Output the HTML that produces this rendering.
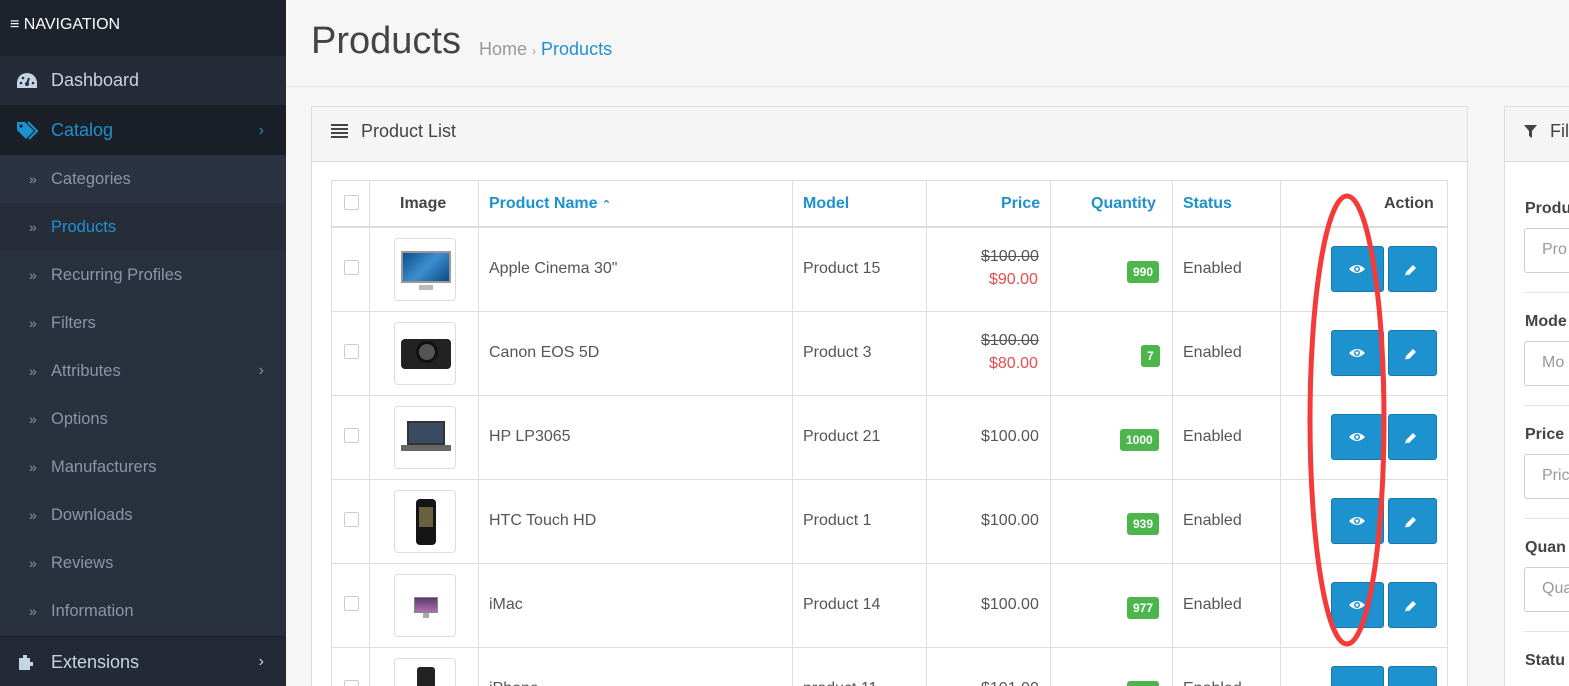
<!DOCTYPE html>
<html style="overflow:hidden;width:1569px;height:686px"><head><meta charset="utf-8"><style>
*{margin:0;padding:0;box-sizing:border-box}
body{width:1569px;height:686px;overflow:hidden;background:#f6f6f6;font-family:"Liberation Sans",sans-serif;position:relative;color:#555}
.a{position:absolute}
#side{left:0;top:0;width:286px;height:686px;background:#2a313e}
.si{position:absolute;left:0;width:286px;height:48px;line-height:48px;font-size:16.5px;color:#8a96a6;padding-left:51px}
.si:before{content:"»";position:absolute;left:29px;color:#8a96a6;font-size:14px}
.top{position:absolute;left:0;width:286px;font-size:18px;padding-left:51px;color:#c5d4e4}
.chev{position:absolute;right:22px;font-size:16px}
.row{position:absolute;left:331px;width:1117px;height:84px;border-bottom:1px solid #ddd}
.c{position:absolute;top:0;height:84px;border-left:1px solid #ddd}
.t{position:absolute;font-size:16px;color:#555}
.cb{position:absolute;left:12px;top:32px;width:15px;height:15px;border:1px solid #ccc;border-radius:2px;background:#fff}
.thumb{position:absolute;left:62px;top:10px;width:62px;height:63px;border:1px solid #ddd;border-radius:4px;background:#fff}
.badge{position:absolute;background:#4cb64c;color:#fff;font-weight:bold;font-size:12px;height:22px;line-height:22px;padding:0 6px;border-radius:3px;top:33px}
.btn{position:absolute;top:18px;width:53px;height:46px;background:#1e91cf;border:1px solid #1978ab;border-radius:3px}
.hd{position:absolute;top:0;height:47px;line-height:46px;font-weight:bold;font-size:16px;color:#1e91cf}
</style></head><body>
<div id="side" class="a">
 <div class="a" style="left:0;top:0;width:286px;height:56px;background:#1d222d;color:#fff;font-size:16px;line-height:50px;padding-left:10px">≡ NAVIGATION</div>
 <div class="top" style="top:56px;height:50px;line-height:49px;background:#252b37;border-bottom:1px solid #1c212b">Dashboard
  <svg class="a" style="left:16px;top:16px" width="22" height="18" viewBox="0 0 22 18"><path d="M11 1A10 10 0 0 0 1 11v5h20v-5A10 10 0 0 0 11 1z" fill="#c5d4e4"/><circle cx="11" cy="12" r="2" fill="#252b37"/><path d="M11 12l2-6" stroke="#252b37" stroke-width="2"/><circle cx="5" cy="11" r="1.3" fill="#252b37"/><circle cx="7" cy="6" r="1.3" fill="#252b37"/><circle cx="17" cy="11" r="1.3" fill="#252b37"/></svg></div>
 <div class="top" style="top:106px;height:49px;line-height:49px;background:#1a1f28;color:#1e91cf">Catalog<span class="chev">›</span>
  <svg class="a" style="left:16px;top:15px" width="24" height="20" viewBox="0 0 24 20"><path d="M1 1h8l9 9-8 8-9-9z" fill="#1e91cf"/><path d="M12 1l9 9-8 8" stroke="#1e91cf" stroke-width="2" fill="none"/><circle cx="5" cy="5" r="1.6" fill="#1a1f28"/></svg></div>
 <div class="si" style="top:155px;background:#2b3342">Categories</div>
 <div class="si" style="top:203px;background:#262d39;color:#1e91cf">Products</div>
 <div class="si" style="top:251px">Recurring Profiles</div>
 <div class="si" style="top:299px">Filters</div>
 <div class="si" style="top:347px">Attributes<span class="chev" style="color:#8a96a6">›</span></div>
 <div class="si" style="top:395px">Options</div>
 <div class="si" style="top:443px">Manufacturers</div>
 <div class="si" style="top:491px">Downloads</div>
 <div class="si" style="top:539px">Reviews</div>
 <div class="si" style="top:587px">Information</div>
 <div class="top" style="top:636px;height:50px;line-height:50px;background:#232a35;border-top:1px solid #1c212b">Extensions<span class="chev">›</span>
  <svg class="a" style="left:17px;top:16px" width="18" height="18" viewBox="0 0 18 18"><path d="M2 5h4V2h4v3h3v4h3v4h-3v4H2z" fill="#c5d4e4"/></svg></div>
</div>

<div class="a" style="left:311px;top:20px;font-size:38px;color:#444">Products</div>
<div class="a" style="left:479px;top:39px;font-size:18px;color:#999">Home <span style="font-size:12px">›</span> <span style="color:#1e91cf">Products</span></div>
<div class="a" style="left:286px;top:86px;width:1283px;height:1px;background:#e2e2e2"></div>

<div class="a" style="left:311px;top:106px;width:1157px;height:580px;background:#fff;border:1px solid #ddd;border-bottom:none"></div>
<div class="a" style="left:312px;top:107px;width:1155px;height:55px;background:#f5f5f5;border-bottom:1px solid #ddd"></div>
<div class="a" style="left:331px;top:124px;width:17px;height:14px;background:repeating-linear-gradient(#444 0 2px,transparent 2px 4px)"></div>
<div class="a" style="left:361px;top:121px;font-size:18px;color:#444">Product List</div>

<div class="a" style="left:1504px;top:106px;width:65px;height:580px;background:#fff;border:1px solid #ddd;border-right:none;border-bottom:none"></div>
<div class="a" style="left:1505px;top:107px;width:64px;height:55px;background:#f5f5f5;border-bottom:1px solid #ddd"></div>
<svg class="a" style="left:1524px;top:125px" width="13" height="13" viewBox="0 0 13 13"><path d="M0 0h13L8 6v7L5 11V6z" fill="#444"/></svg>
<div class="a" style="left:1550px;top:121px;font-size:18px;color:#444">Fil</div>
<div class="a" style="left:1525px;top:200px;font-weight:bold;font-size:16px;color:#444">Produ</div>
<div class="a" style="left:1524px;top:228px;width:60px;height:45px;border:1px solid #ccc;border-radius:3px;padding:12px 17px;color:#999;font-size:16px">Pro</div>
<div class="a" style="left:1524px;top:292px;width:45px;height:1px;background:#e5e5e5"></div>
<div class="a" style="left:1525px;top:313px;font-weight:bold;font-size:16px;color:#444">Mode</div>
<div class="a" style="left:1524px;top:341px;width:60px;height:45px;border:1px solid #ccc;border-radius:3px;padding:12px 17px;color:#999;font-size:16px">Mo</div>
<div class="a" style="left:1524px;top:405px;width:45px;height:1px;background:#e5e5e5"></div>
<div class="a" style="left:1525px;top:426px;font-weight:bold;font-size:16px;color:#444">Price</div>
<div class="a" style="left:1524px;top:454px;width:60px;height:45px;border:1px solid #ccc;border-radius:3px;padding:12px 17px;color:#999;font-size:16px">Pric</div>
<div class="a" style="left:1524px;top:518px;width:45px;height:1px;background:#e5e5e5"></div>
<div class="a" style="left:1525px;top:539px;font-weight:bold;font-size:16px;color:#444">Quan</div>
<div class="a" style="left:1524px;top:567px;width:60px;height:45px;border:1px solid #ccc;border-radius:3px;padding:12px 17px;color:#999;font-size:16px">Qua</div>
<div class="a" style="left:1524px;top:631px;width:45px;height:1px;background:#e5e5e5"></div>
<div class="a" style="left:1525px;top:652px;font-weight:bold;font-size:16px;color:#444">Statu</div>

<div class="a" style="left:331px;top:180px;width:1117px;height:48px;border:1px solid #ddd;border-bottom:2px solid #ddd;background:#fff">
 <div class="cb" style="top:14px"></div>
 <div class="c" style="left:37px;height:46px"></div><div class="c" style="left:146px;height:46px"></div><div class="c" style="left:460px;height:46px"></div><div class="c" style="left:594px;height:46px"></div><div class="c" style="left:718px;height:46px"></div><div class="c" style="left:840px;height:46px"></div><div class="c" style="left:948px;height:46px"></div>
 <div class="hd" style="left:68px;color:#444">Image</div>
 <div class="hd" style="left:157px">Product Name <span style="font-size:11px">⌃</span></div>
 <div class="hd" style="left:471px">Model</div>
 <div class="hd" style="left:669px">Price</div>
 <div class="hd" style="left:759px">Quantity</div>
 <div class="hd" style="left:851px">Status</div>
 <div class="hd" style="left:1052px;color:#444">Action</div>
</div>

<div class="row" style="top:228px;border-left:1px solid #ddd;border-right:1px solid #ddd;background:#fff">
 <div class="cb"></div><div class="c" style="left:37px"></div><div class="c" style="left:146px"></div><div class="c" style="left:460px"></div><div class="c" style="left:594px"></div><div class="c" style="left:718px"></div><div class="c" style="left:840px"></div><div class="c" style="left:948px"></div>
 <div class="thumb"><div class="a" style="left:6px;top:12px;width:50px;height:32px;background:linear-gradient(135deg,#0b4f8f,#3c8fd0 50%,#0d4a85);border:2px solid #999"></div><div class="a" style="left:24px;top:46px;width:14px;height:5px;background:#bbb"></div></div>
 <div class="t" style="left:157px;top:32px">Apple Cinema 30"</div><div class="t" style="left:471px;top:32px">Product 15</div>
 <div class="t" style="left:649px;top:20px;text-decoration:line-through">$100.00</div><div class="t" style="left:657px;top:43px;color:#e44d4d">$90.00</div>
 <div class="badge" style="left:795px">990</div><div class="t" style="left:851px;top:32px">Enabled</div>
 <div class="btn" style="left:999px"></div><div class="btn" style="left:1056px;width:49px"></div>
</div>
<div class="row" style="top:312px;border-left:1px solid #ddd;border-right:1px solid #ddd;background:#fff">
 <div class="cb"></div><div class="c" style="left:37px"></div><div class="c" style="left:146px"></div><div class="c" style="left:460px"></div><div class="c" style="left:594px"></div><div class="c" style="left:718px"></div><div class="c" style="left:840px"></div><div class="c" style="left:948px"></div>
 <div class="thumb"><div class="a" style="left:6px;top:16px;width:50px;height:30px;background:#222;border-radius:4px"></div><div class="a" style="left:21px;top:18px;width:22px;height:22px;border-radius:50%;background:#555;border:3px solid #111"></div></div>
 <div class="t" style="left:157px;top:32px">Canon EOS 5D</div><div class="t" style="left:471px;top:32px">Product 3</div>
 <div class="t" style="left:649px;top:20px;text-decoration:line-through">$100.00</div><div class="t" style="left:657px;top:43px;color:#e44d4d">$80.00</div>
 <div class="badge" style="left:809px">7</div><div class="t" style="left:851px;top:32px">Enabled</div>
 <div class="btn" style="left:999px"></div><div class="btn" style="left:1056px;width:49px"></div>
</div>
<div class="row" style="top:396px;border-left:1px solid #ddd;border-right:1px solid #ddd;background:#fff">
 <div class="cb"></div><div class="c" style="left:37px"></div><div class="c" style="left:146px"></div><div class="c" style="left:460px"></div><div class="c" style="left:594px"></div><div class="c" style="left:718px"></div><div class="c" style="left:840px"></div><div class="c" style="left:948px"></div>
 <div class="thumb"><div class="a" style="left:12px;top:14px;width:38px;height:24px;background:#3a4a60;border:2px solid #333"></div><div class="a" style="left:6px;top:38px;width:50px;height:6px;background:#666"></div></div>
 <div class="t" style="left:157px;top:32px">HP LP3065</div><div class="t" style="left:471px;top:32px">Product 21</div>
 <div class="t" style="left:649px;top:32px">$100.00</div>
 <div class="badge" style="left:788px">1000</div><div class="t" style="left:851px;top:32px">Enabled</div>
 <div class="btn" style="left:999px"></div><div class="btn" style="left:1056px;width:49px"></div>
</div>
<div class="row" style="top:480px;border-left:1px solid #ddd;border-right:1px solid #ddd;background:#fff">
 <div class="cb"></div><div class="c" style="left:37px"></div><div class="c" style="left:146px"></div><div class="c" style="left:460px"></div><div class="c" style="left:594px"></div><div class="c" style="left:718px"></div><div class="c" style="left:840px"></div><div class="c" style="left:948px"></div>
 <div class="thumb"><div class="a" style="left:21px;top:8px;width:20px;height:46px;background:#151515;border-radius:4px"></div><div class="a" style="left:24px;top:16px;width:14px;height:20px;background:#6a6040"></div></div>
 <div class="t" style="left:157px;top:32px">HTC Touch HD</div><div class="t" style="left:471px;top:32px">Product 1</div>
 <div class="t" style="left:649px;top:32px">$100.00</div>
 <div class="badge" style="left:795px">939</div><div class="t" style="left:851px;top:32px">Enabled</div>
 <div class="btn" style="left:999px"></div><div class="btn" style="left:1056px;width:49px"></div>
</div>
<div class="row" style="top:564px;border-left:1px solid #ddd;border-right:1px solid #ddd;background:#fff">
 <div class="cb"></div><div class="c" style="left:37px"></div><div class="c" style="left:146px"></div><div class="c" style="left:460px"></div><div class="c" style="left:594px"></div><div class="c" style="left:718px"></div><div class="c" style="left:840px"></div><div class="c" style="left:948px"></div>
 <div class="thumb"><div class="a" style="left:19px;top:22px;width:24px;height:16px;background:linear-gradient(#5a3a70,#b070b0);border:1px solid #888"></div><div class="a" style="left:28px;top:38px;width:6px;height:5px;background:#aaa"></div></div>
 <div class="t" style="left:157px;top:32px">iMac</div><div class="t" style="left:471px;top:32px">Product 14</div>
 <div class="t" style="left:649px;top:32px">$100.00</div>
 <div class="badge" style="left:795px">977</div><div class="t" style="left:851px;top:32px">Enabled</div>
 <div class="btn" style="left:999px"></div><div class="btn" style="left:1056px;width:49px"></div>
</div>
<div class="row" style="top:648px;border-left:1px solid #ddd;border-right:1px solid #ddd;background:#fff;height:38px;border-bottom:none;overflow:hidden">
 <div class="cb"></div><div class="c" style="left:37px"></div><div class="c" style="left:146px"></div><div class="c" style="left:460px"></div><div class="c" style="left:594px"></div><div class="c" style="left:718px"></div><div class="c" style="left:840px"></div><div class="c" style="left:948px"></div>
 <div class="thumb"><div class="a" style="left:22px;top:8px;width:18px;height:40px;background:#222;border-radius:3px"></div></div>
 <div class="t" style="left:157px;top:32px">iPhone</div><div class="t" style="left:471px;top:32px">product 11</div>
 <div class="t" style="left:649px;top:32px">$101.00</div>
 <div class="badge" style="left:795px">967</div><div class="t" style="left:851px;top:32px">Enabled</div>
 <div class="btn" style="left:999px"></div><div class="btn" style="left:1056px;width:49px"></div>
</div>

<svg class="a" style="left:0;top:0;pointer-events:none" width="1569" height="686">
 <defs>
  <g id="eye"><path d="M-8 0Q0-8 8 0Q0 8-8 0z" fill="#fff"/><circle r="3" fill="#1e91cf"/><circle r="1.5" fill="#fff"/></g>
  <g id="pen"><path d="M-5 6l-1 1 1-4 7-7 3 3-7 7z" fill="#fff"/></g>
 </defs>
 <use href="#eye" x="1357" y="269"/><use href="#pen" x="1411" y="269"/>
 <use href="#eye" x="1357" y="353"/><use href="#pen" x="1411" y="353"/>
 <use href="#eye" x="1357" y="437"/><use href="#pen" x="1411" y="437"/>
 <use href="#eye" x="1357" y="521"/><use href="#pen" x="1411" y="521"/>
 <use href="#eye" x="1357" y="605"/><use href="#pen" x="1411" y="605"/>
 <ellipse cx="1347" cy="420" rx="37" ry="224" fill="none" stroke="#f53a3a" stroke-width="5"/>
</svg>
</body></html>
